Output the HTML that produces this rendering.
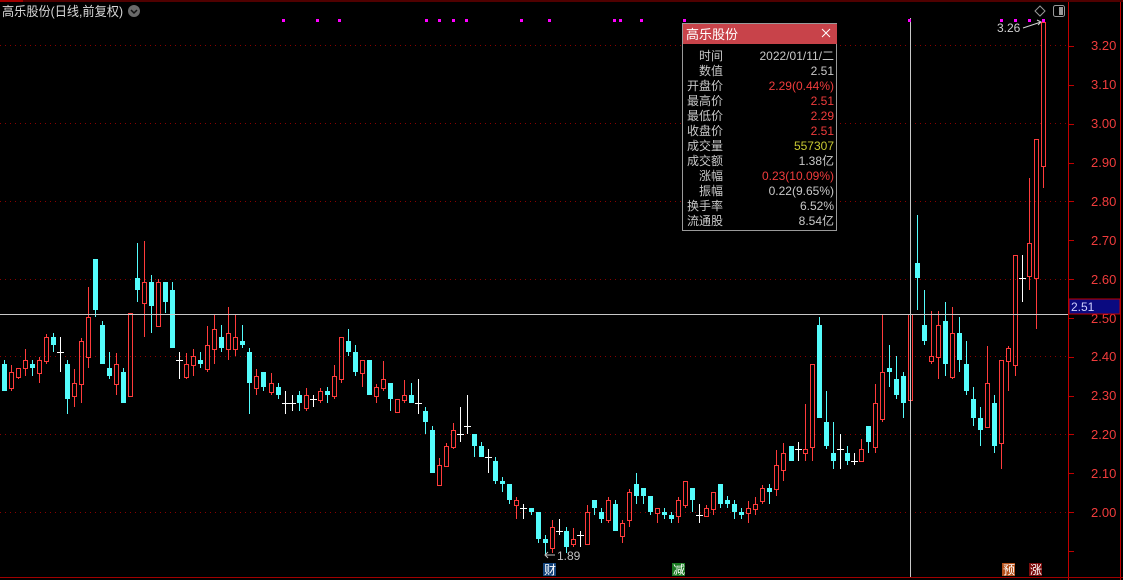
<!DOCTYPE html>
<html><head><meta charset="utf-8"><style>
html,body{margin:0;padding:0;background:#000;width:1123px;height:580px;overflow:hidden}
svg{display:block}
text{font-family:"Liberation Sans","Noto Sans CJK SC",sans-serif}
</style></head><body>
<svg id="s" width="1123" height="580" xmlns="http://www.w3.org/2000/svg">
<rect width="1123" height="580" fill="#000"/>
<line x1="0" y1="1" x2="1123" y2="1" stroke="#a00000" stroke-width="1"/>
<rect x="0.5" y="0.5" width="22" height="1" fill="none" stroke="#a00000"/>
<g stroke="#8a0000" stroke-dasharray="1,4" stroke-width="1">
<line x1="0" y1="45.5" x2="1068" y2="45.5"/>
<line x1="0" y1="123.5" x2="1068" y2="123.5"/>
<line x1="0" y1="201.5" x2="1068" y2="201.5"/>
<line x1="0" y1="279.5" x2="1068" y2="279.5"/>
<line x1="0" y1="356.5" x2="1068" y2="356.5"/>
<line x1="0" y1="434.5" x2="1068" y2="434.5"/>
<line x1="0" y1="512.5" x2="1068" y2="512.5"/>
</g>
<line x1="1068.5" y1="2" x2="1068.5" y2="580" stroke="#c00000"/>
<line x1="1120.5" y1="2" x2="1120.5" y2="580" stroke="#c00000"/>
<line x1="0" y1="577.5" x2="1123" y2="577.5" stroke="#a00000"/>
<g stroke="#c00000" id="ticks"></g>
<g fill="#f03c3c" font-size="13" text-anchor="start">
<text x="1091" y="50">3.20</text>
<text x="1091" y="89">3.10</text>
<text x="1091" y="128">3.00</text>
<text x="1091" y="167">2.90</text>
<text x="1091" y="206">2.80</text>
<text x="1091" y="245">2.70</text>
<text x="1091" y="284">2.60</text>
<text x="1091" y="323">2.50</text>
<text x="1091" y="361">2.40</text>
<text x="1091" y="400">2.30</text>
<text x="1091" y="439">2.20</text>
<text x="1091" y="478">2.10</text>
<text x="1091" y="517">2.00</text>
</g>
<g id="c"></g>
<line x1="910.5" y1="18" x2="910.5" y2="577" stroke="#c8c8c8"/>
<line x1="0" y1="314.5" x2="1068" y2="314.5" stroke="#c8c8c8"/>
<rect x="1069" y="299" width="51" height="15" fill="#0a0a80" stroke="#c00000"/>
<text x="1071" y="311" fill="#d0d0ff" font-size="12">2.51</text>
<text x="2" y="16" fill="#d8d8d8" font-size="13" textLength="121" lengthAdjust="spacingAndGlyphs">高乐股份(日线,前复权)</text>
<circle cx="134" cy="11" r="6" fill="#6a6a6a"/>
<path d="M131 10 L134 13 L137 10" stroke="#111" stroke-width="1.5" fill="none"/>
<path d="M1040 6 L1045 11 L1040 16 L1035 11 Z" stroke="#999" fill="none"/>
<rect x="1053.5" y="5.5" width="11" height="11" rx="2" fill="none" stroke="#999"/>
<rect x="1059" y="7" width="4" height="8" fill="#999"/>
<g fill="#ff00ff" id="dots"></g>
<text x="997" y="32" fill="#d0d0d0" font-size="12">3.26</text>
<path d="M1023 28 L1041 22 M1037 20 L1041 22 L1038 25" stroke="#d0d0d0" fill="none"/>
<text x="557" y="560" fill="#c0c0c0" font-size="12">1.89</text>
<path d="M555 555 L545 555 M548 552 L545 555 L548 558" stroke="#c0c0c0" fill="none"/>
<rect x="543" y="563" width="13" height="13" fill="#12427a"/>
<text x="544" y="574" fill="#fff" font-size="12">财</text>
<rect x="672" y="563" width="13" height="13" fill="#1a7a22"/>
<text x="673" y="574" fill="#fff" font-size="12">减</text>
<rect x="1002" y="563" width="13" height="13" fill="#b4501a"/>
<text x="1003" y="574" fill="#fff" font-size="12">预</text>
<rect x="1029" y="563" width="13" height="13" fill="#7a0c0c"/>
<text x="1030" y="574" fill="#fff" font-size="12">涨</text>
<rect x="682.5" y="23.5" width="154" height="207" fill="#000" stroke="#9a9a9a"/>
<rect x="683" y="24" width="154" height="20" fill="#c8434a"/>
<text x="686" y="39" fill="#fff" font-size="13">高乐股份</text>
<path d="M822 29 L830 37 M830 29 L822 37" stroke="#fff" stroke-width="1"/>
<g font-size="12" text-anchor="end">
<g fill="#c8c8c8">
<text x="723" y="60">时间</text><text x="723" y="75">数值</text><text x="723" y="90">开盘价</text>
<text x="723" y="105">最高价</text><text x="723" y="120">最低价</text><text x="723" y="135">收盘价</text>
<text x="723" y="150">成交量</text><text x="723" y="165">成交额</text><text x="723" y="180">涨幅</text>
<text x="723" y="195">振幅</text><text x="723" y="210">换手率</text><text x="723" y="225">流通股</text>
</g>
<text x="834" y="60" fill="#c8c8c8">2022/01/11/二</text>
<text x="834" y="75" fill="#c8c8c8">2.51</text>
<text x="834" y="90" fill="#f03c3c">2.29(0.44%)</text>
<text x="834" y="105" fill="#f03c3c">2.51</text>
<text x="834" y="120" fill="#f03c3c">2.29</text>
<text x="834" y="135" fill="#f03c3c">2.51</text>
<text x="834" y="150" fill="#c8c832">557307</text>
<text x="834" y="165" fill="#c8c8c8">1.38亿</text>
<text x="834" y="180" fill="#f03c3c">0.23(10.09%)</text>
<text x="834" y="195" fill="#c8c8c8">0.22(9.65%)</text>
<text x="834" y="210" fill="#c8c8c8">6.52%</text>
<text x="834" y="225" fill="#c8c8c8">8.54亿</text>
</g>
</svg>
<script>
var D=[[360,364,391,391,'c'],[365,372,388,391,'r'],[368,368,377,379,'r'],[349,360,368,376,'r'],[360,364,368,376,'c'],[357,360,373,383,'r'],[334,337,361,364,'r'],[333,337,345,352,'c'],[337,352,352,372,'w'],[360,364,399,414,'c'],
[369,383,396,407,'r'],[338,341,384,403,'r'],[287,317,357,368,'r'],[259,259,310,317,'c'],[321,325,364,364,'c'],[352,368,376,379,'c'],[353,364,384,395,'r'],[368,372,403,403,'c'],[313,313,396,396,'r'],[243,278,290,302,'c'],
[241,282,303,337,'r'],[275,282,306,333,'c'],[279,282,326,326,'r'],[282,282,302,313,'c'],[282,290,348,348,'c'],[352,360,360,379,'w'],[353,364,377,379,'r'],[349,356,365,376,'r'],[352,360,364,368,'c'],[326,345,369,372,'r'],
[315,329,349,364,'r'],[325,337,348,352,'c'],[307,333,349,360,'r'],[315,337,349,356,'r'],[325,341,345,348,'c'],[348,352,383,414,'c'],[369,376,388,395,'r'],[372,372,387,391,'c'],[373,383,392,395,'r'],[383,387,395,399,'c'],
[391,403,403,414,'w'],[395,403,403,411,'w'],[391,395,403,411,'c'],[388,395,408,411,'r'],[395,399,399,407,'w'],[388,391,400,403,'r'],[387,391,395,403,'c'],[365,376,396,399,'r'],[337,337,379,383,'r'],[329,341,352,356,'c'],
[345,352,372,376,'c'],[360,360,373,387,'r'],[360,360,395,395,'c'],[384,387,396,403,'r'],[361,379,388,391,'r'],[383,383,399,411,'c'],[399,399,412,412,'r'],[380,395,400,403,'r'],[383,395,403,403,'c'],[379,403,403,414,'w'],
[407,411,422,434,'c'],[426,430,473,473,'c'],[458,465,485,485,'r'],[443,446,466,466,'r'],[423,430,447,449,'r'],[407,434,434,442,'w'],[395,426,426,434,'w'],[434,434,446,457,'c'],[442,446,457,457,'c'],[449,457,457,473,'w'],
[457,461,481,484,'c'],[477,481,484,492,'c'],[484,484,500,504,'c'],[497,500,505,519,'r'],[504,508,508,519,'w'],[508,508,512,515,'c'],[512,512,539,543,'c'],[535,539,543,555,'c'],[520,527,548,553,'r'],[519,531,531,535,'w'],
[527,531,547,553,'c'],[528,539,544,547,'r'],[531,535,535,547,'w'],[505,512,544,544,'r'],[500,500,508,515,'c'],[508,512,519,523,'c'],[497,500,520,523,'r'],[500,504,531,531,'c'],[520,523,536,543,'r'],[489,492,520,527,'r'],
[473,484,496,504,'c'],[488,488,496,504,'c'],[496,496,512,515,'c'],[508,508,513,523,'r'],[508,512,515,519,'c'],[512,515,519,523,'c'],[497,500,516,523,'r'],[481,481,505,508,'r'],[488,488,500,512,'c'],[504,515,515,523,'w'],
[505,508,516,516,'r'],[492,492,509,515,'r'],[484,484,504,508,'c'],[496,500,504,508,'c'],[500,504,512,519,'c'],[508,512,515,519,'c'],[501,508,513,523,'r'],[497,504,509,515,'r'],[485,488,501,504,'r'],[484,488,492,504,'c'],
[450,465,489,496,'r'],[443,453,470,481,'r'],[446,446,461,461,'c'],[442,449,449,461,'w'],[404,449,453,461,'r'],[364,364,447,461,'r'],[317,325,418,418,'c'],[391,422,446,449,'c'],[422,453,461,469,'c'],[434,449,449,469,'w'],
[446,453,461,465,'c'],[453,461,461,465,'w'],[439,449,461,461,'r'],[426,426,442,453,'c'],[384,403,447,453,'r'],[315,372,419,422,'r'],[345,368,372,387,'c'],[356,379,395,399,'c'],[372,376,403,418,'c'],[314,314,400,400,'r'],
[215,263,278,310,'c'],[290,325,341,345,'c'],[311,356,361,364,'r'],[311,325,357,379,'r'],[302,321,364,376,'c'],[307,333,377,379,'r'],[317,333,360,372,'c'],[341,364,391,395,'c'],[387,399,418,426,'c'],[407,418,430,446,'c'],
[346,383,427,427,'r'],[395,403,446,453,'c'],[360,360,443,469,'r'],[346,348,361,391,'r'],[255,255,365,376,'r'],[255,278,278,302,'w'],[178,243,276,290,'r'],[139,139,278,329,'r'],[20,22,166,188,'r']];
var g=document.getElementById('c'),h='';
for(var k=0;k<D.length;k++){var d=D[k],x=Math.round(3.5+7.027*k),t=d[4];
var col=t=='r'?'#ff3b3b':(t=='c'?'#54fcfc':'#ffffff');var xc=x+0.5;
if(d[0]<d[1])h+='<line x1="'+xc+'" y1="'+d[0]+'" x2="'+xc+'" y2="'+d[1]+'" stroke="'+col+'"/>';
if(d[3]>d[2])h+='<line x1="'+xc+'" y1="'+d[2]+'" x2="'+xc+'" y2="'+d[3]+'" stroke="'+col+'"/>';
if(t=='r')h+='<rect x="'+(x-2+0.5)+'" y="'+(d[1]+0.5)+'" width="4" height="'+Math.max(1,d[2]-d[1])+'" fill="none" stroke="'+col+'"/>';
else if(t=='c')h+='<rect x="'+(x-2)+'" y="'+d[1]+'" width="5" height="'+Math.max(2,d[2]-d[1])+'" fill="'+col+'"/>';
else h+='<line x1="'+(x-3)+'" y1="'+(d[1]+0.5)+'" x2="'+(x+4)+'" y2="'+(d[1]+0.5)+'" stroke="'+col+'"/>';}
g.innerHTML=h;
var tk='';for(var p=0;p<14;p++){var y=Math.round(512-(p*0.1-0.1)*388.3)+0.5;if(y>2&&y<577)tk+='<line x1="1068" y1="'+y+'" x2="1074" y2="'+y+'"/>';}
document.getElementById('ticks').innerHTML=tk;
var dx=[283,317,339,426,439,453,466,521,549,614,620,641,684,909,1001,1015,1029,1043],dh='';
for(var i=0;i<dx.length;i++)dh+='<rect x="'+(dx[i]-1)+'" y="19" width="3" height="3"/>';
document.getElementById('dots').innerHTML=dh;
</script>
</body></html>
